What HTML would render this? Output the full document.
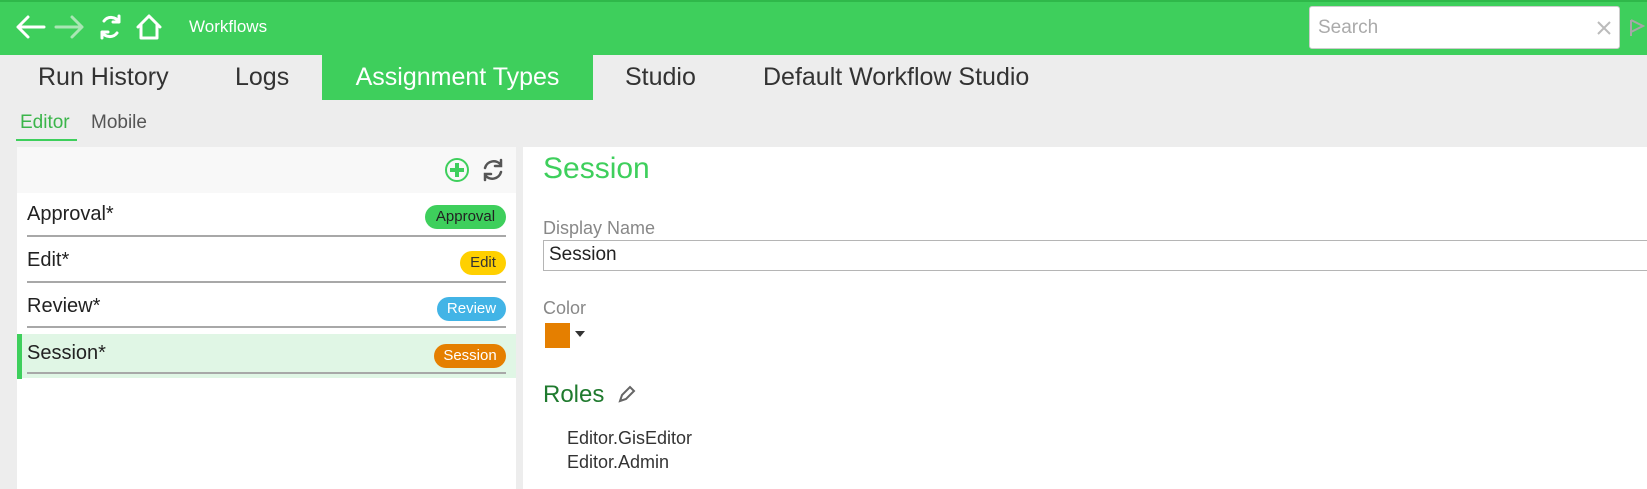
<!DOCTYPE html>
<html><head><meta charset="utf-8"><style>
*{box-sizing:border-box;margin:0;padding:0}
body{width:1647px;height:489px;overflow:hidden;background:#ededed;font-family:"Liberation Sans",Arial,sans-serif;position:relative;color:#333}
.a{position:absolute;white-space:nowrap}
.top{left:0;top:0;width:1647px;height:55px;background:#3ecf5c;border-top:2px solid #2fb84a}
.tab{top:55px;height:45px;line-height:44px;font-size:25px;color:#333}
.row{left:27px;font-size:20px;color:#222}
.line{left:27px;width:479px;height:2px;background:#a8a8a8}
.badge{height:24px;line-height:24px;border-radius:12px;font-size:14px;text-align:center}
</style></head><body>
<div class="a top"></div>
<svg class="a" style="left:14px;top:12px" width="150" height="32" viewBox="0 0 150 32">
<g fill="none" stroke="#fff" stroke-width="3" stroke-linecap="round" stroke-linejoin="round">
<path d="M4 15H30M14 5L4 15L14 25"/>
<path d="M42 15H68M58 5L68 15L58 25" stroke="#a9e6b4"/>
<path d="M90 9a9 9 0 0 1 15 1M105 4v6h-6M103 21a9 9 0 0 1-15-1M88 26v-6h6"/>
<path d="M124 15L135 4L146 15M127 13v13h16V13"/>
</g></svg>
<div class="a" style="left:189px;top:17px;font-size:17px;color:#fff">Workflows</div>
<div class="a" style="left:1309px;top:6px;width:311px;height:43px;background:#fff;border:1px solid #ccc;border-radius:3px"></div>
<div class="a" style="left:1318px;top:17px;font-size:19px;color:#aaa">Search</div>
<svg class="a" style="left:1596px;top:20px" width="16" height="16"><path d="M2 2L14 14M14 2L2 14" stroke="#bbb" stroke-width="2"/></svg>
<svg class="a" style="left:1629px;top:18px" width="18" height="20"><path d="M2 2V18M2 2L14 8L2 14" stroke="#a7a7a7" stroke-width="2" fill="none"/></svg>

<div class="a tab" style="left:38px">Run History</div>
<div class="a tab" style="left:235px">Logs</div>
<div class="a tab" style="left:322px;width:271px;background:#3ecf5c;color:#fff;text-align:center">Assignment Types</div>
<div class="a tab" style="left:625px">Studio</div>
<div class="a tab" style="left:763px">Default Workflow Studio</div>

<div class="a" style="left:20px;top:112px;font-size:19px;color:#3bb54a">Editor</div>
<div class="a" style="left:91px;top:112px;font-size:19px;color:#555">Mobile</div>
<div class="a" style="left:16px;top:139px;width:61px;height:2px;background:#3ecf5c"></div>

<div class="a" style="left:17px;top:147px;width:499px;height:342px;background:#fff"></div>
<div class="a" style="left:17px;top:147px;width:499px;height:46px;background:#f8f8f8"></div>
<svg class="a" style="left:444px;top:157px" width="60" height="28">
<circle cx="13" cy="13" r="11" fill="none" stroke="#3ecf5c" stroke-width="2"/>
<path d="M13 6V20M6 13H20" stroke="#3ecf5c" stroke-width="4"/>
<g fill="none" stroke="#555" stroke-width="2.5" stroke-linecap="round">
<path d="M41 11a9 9 0 0 1 16-3M57 3v6h-6M57 15a9 9 0 0 1-16 3M41 23v-6h6"/></g></svg>

<div class="a row" style="top:203px">Approval*</div>
<div class="a badge" style="left:425px;top:205px;width:81px;background:#3ecf5c;color:#222;font-size:15px">Approval</div>
<div class="a line" style="top:235px"></div>
<div class="a row" style="top:249px">Edit*</div>
<div class="a badge" style="left:460px;top:251px;width:46px;background:#ffd000;color:#333;font-size:15px">Edit</div>
<div class="a line" style="top:281px"></div>
<div class="a row" style="top:295px">Review*</div>
<div class="a badge" style="left:437px;top:297px;width:69px;background:#42b4e6;color:#fff;font-size:15px">Review</div>
<div class="a line" style="top:326px"></div>
<div class="a" style="left:17px;top:334px;width:499px;height:44px;background:#e0f6e5"></div>
<div class="a" style="left:17px;top:334px;width:5px;height:45px;background:#3ecf5c"></div>
<div class="a row" style="top:342px">Session*</div>
<div class="a badge" style="left:434px;top:344px;width:72px;background:#e57f00;color:#fff;font-size:15px">Session</div>
<div class="a line" style="top:372px"></div>

<div class="a" style="left:523px;top:147px;width:1124px;height:342px;background:#fff"></div>
<div class="a" style="left:543px;top:152px;font-size:30px;color:#3ecf5c">Session</div>
<div class="a" style="left:543px;top:218px;font-size:18px;color:#888">Display Name</div>
<div class="a" style="left:543px;top:240px;width:1110px;height:31px;border:1px solid #b5b5b5"></div>
<div class="a" style="left:549px;top:244px;font-size:19px;color:#222">Session</div>
<div class="a" style="left:543px;top:298px;font-size:18px;color:#888">Color</div>
<div class="a" style="left:545px;top:323px;width:25px;height:25px;background:#e57f00"></div>
<svg class="a" style="left:575px;top:331px" width="10" height="6"><path d="M0 0H10L5 6Z" fill="#333"/></svg>
<div class="a" style="left:543px;top:381px;font-size:24px;color:#1f7a2e">Roles</div>
<svg class="a" style="left:616px;top:385px" width="20" height="20"><path d="M4 16L6 10L14 2L18 6L10 14Z" fill="none" stroke="#666" stroke-width="2"/></svg>
<div class="a" style="left:567px;top:428px;font-size:18px;color:#333">Editor.GisEditor</div>
<div class="a" style="left:567px;top:452px;font-size:18px;color:#333">Editor.Admin</div>
</body></html>
